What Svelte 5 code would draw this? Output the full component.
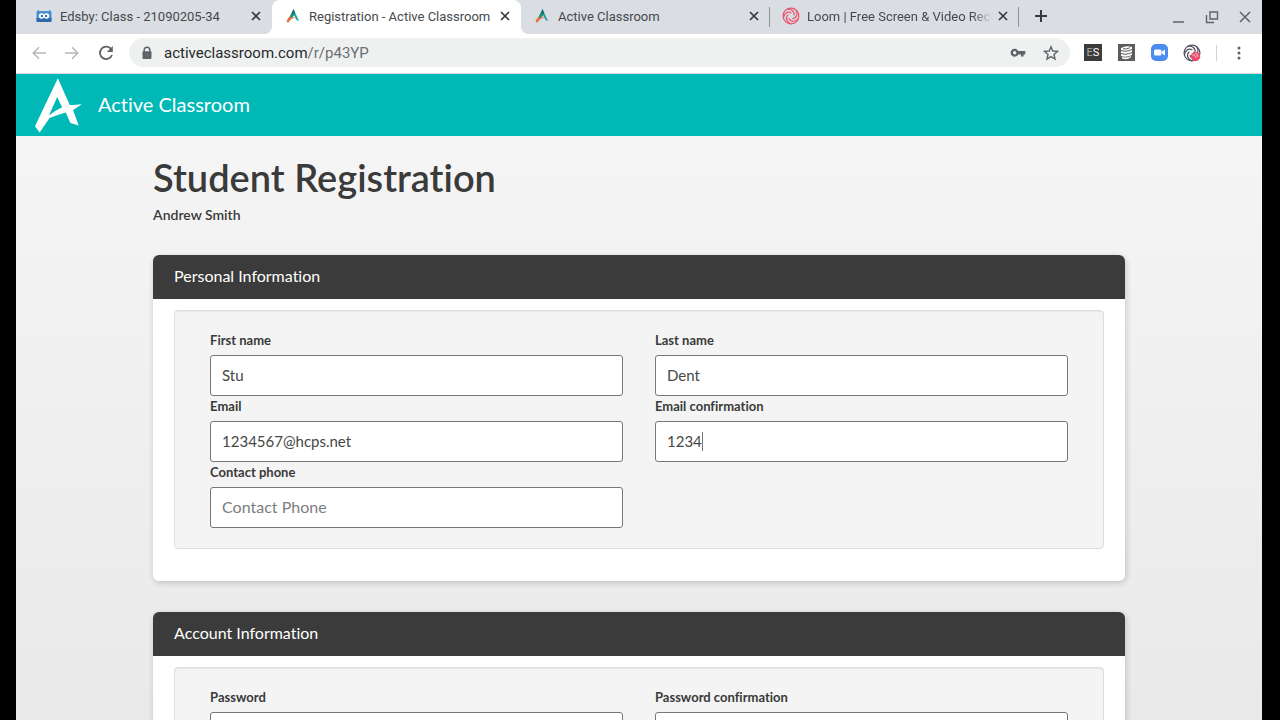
<script>
  const tabs = [
    { title: 'Edsby: Class - 21090205-34', icon: 'edsby' },
    { title: 'Registration - Active Classroom', icon: 'active', current: true },
    { title: 'Active Classroom', icon: 'active' },
    { title: 'Loom | Free Screen & Video Reco', icon: 'loom', faded: true }
  ];

  const sections = [
    {
      title: 'Personal Information',
      fields: [
        { id: 'first-name', label: 'First name', value: 'Stu' },
        { id: 'last-name', label: 'Last name', value: 'Dent' },
        { id: 'email', label: 'Email', value: '1234567@hcps.net' },
        { id: 'email-confirm', label: 'Email confirmation', value: '1234', caret: true },
        { id: 'phone', label: 'Contact phone', value: '', placeholder: 'Contact Phone' }
      ]
    },
    {
      title: 'Account Information',
      fields: [
        { id: 'password', label: 'Password', value: '', type: 'password' },
        { id: 'password-confirm', label: 'Password confirmation', value: '', type: 'password' }
      ]
    }
  ];

  const petals = [0, 72, 144, 216, 288];
</script>

{#snippet swirl()}
  <circle cx="9" cy="9" r="7.900" />
  {#each petals as angle}
    <path d="M4.500 2.500C9 1.500 13 4 12 8.500" transform="rotate({angle} 9 9)" />
  {/each}
{/snippet}

{#snippet cross()}
  <svg width="10" height="10" viewBox="0 0 10 10" class="stroke"><path d="M1 1L9 9M9 1L1 9" stroke-width="1.700" /></svg>
{/snippet}

<div class="screen">
  <div class="tab-strip">
    {#each tabs as tab, i}
      <div class="tab" class:current={tab.current} class:divided={i > 1}>
        {#if tab.icon === 'edsby'}
          <svg class="favicon" width="18" height="16" viewBox="0 0 18 16">
            <path d="M1.500 4L3 2L4.500 3H13.500L15 2L16.500 4V13Q16.500 14 15.500 14H2.500Q1.500 14 1.500 13Z" fill="#4a8fd0" />
            <path d="M1.500 10H16.500V13Q16.500 14 15.500 14H2.500Q1.500 14 1.500 13Z" fill="#2f6bab" />
            <circle cx="6.500" cy="8" r="2.700" fill="#fff" /><circle cx="11.500" cy="8" r="2.700" fill="#fff" />
            <circle cx="6.900" cy="8" r="1.200" fill="#3973a9" /><circle cx="11.100" cy="8" r="1.200" fill="#3973a9" />
          </svg>
        {:else if tab.icon === 'active'}
          <svg class="favicon" width="16" height="16" viewBox="0 0 16 16">
            <path d="M8.500 1L10 6L5.500 12L2 14Z" fill="#248b69" />
            <path d="M8.500 1L14 13L11.500 12L8 5Z" fill="#17a5a5" />
            <path d="M8.500 1L10 5L8 7L7 5Z" fill="#176c75" />
            <path d="M4 9L6.500 9.500L12 9L6 11L3 15L1.500 13Z" fill="#ed7044" />
          </svg>
        {:else}
          <svg class="favicon loom" width="18" height="18" viewBox="0 0 18 18">{@render swirl()}</svg>
        {/if}
        <span class="tab-title" class:faded={tab.faded}>{tab.title}</span>
        <button class="tab-close" aria-label="Close tab">{@render cross()}</button>
      </div>
    {/each}
    <button class="new-tab" aria-label="New tab">
      <svg width="14" height="14" viewBox="0 0 14 14" class="stroke"><path d="M7 1V13M1 7H13" stroke-width="2" /></svg>
    </button>
    <div class="window-controls">
      <button aria-label="Minimize"><svg width="14" height="14" viewBox="0 0 14 14" class="stroke"><path d="M1 12H12" stroke-width="1.500" /></svg></button>
      <button aria-label="Restore"><svg width="14" height="14" viewBox="0 0 14 14" class="stroke"><path d="M5 2H12.500V9H5ZM1.500 5V12.500H9" stroke-width="1.400" /></svg></button>
      <button aria-label="Close"><svg width="14" height="14" viewBox="0 0 14 14" class="stroke"><path d="M2 2L12 12M12 2L2 12" stroke-width="1.500" /></svg></button>
    </div>
  </div>

  <div class="toolbar">
    <div class="nav">
      <button class="faded" aria-label="Back"><svg width="14" height="14" viewBox="0 0 14 14" class="stroke"><path d="M14 7H1.500M7 1.200L1.200 7L7 12.800" stroke-width="1.500" /></svg></button>
      <button class="faded" aria-label="Forward"><svg width="14" height="14" viewBox="0 0 14 14" class="stroke"><path d="M0 7H12.500M7 1.200L12.800 7L7 12.800" stroke-width="1.500" /></svg></button>
      <button aria-label="Reload">
        <svg width="16" height="16" viewBox="0 0 16 16" class="stroke"><path d="M13.200 4.200A6.200 6.200 0 1 0 14 10" stroke-width="1.800" /><path d="M14.800 1V7H8.800Z" fill="currentColor" stroke="none" /></svg>
      </button>
    </div>
    <div class="address">
      <svg width="12" height="14" viewBox="0 0 12 14"><path d="M3.200 6V4A2.800 2.800 0 0 1 8.800 4V6" fill="none" stroke="#5f6368" stroke-width="1.500" /><rect x="1.500" y="5.300" width="9" height="7.700" rx="1" fill="#5f6368" /><circle cx="6" cy="9" r="1" fill="#777b80" /></svg>
      <span class="url">activeclassroom.com<span>/r/p43YP</span></span>
      <button aria-label="Saved passwords">
        <svg width="16" height="16" viewBox="0 0 16 16"><path fill-rule="evenodd" d="M8.200 6A4 4 0 1 0 8.200 9.400H11V11.500H13.600V9.400H15.300V6ZM4.700 6.100A1.700 1.700 0 1 1 4.700 9.500A1.700 1.700 0 1 1 4.700 6.100Z" fill="#5f6368" /></svg>
      </button>
      <button aria-label="Bookmark">
        <svg width="16" height="16" viewBox="0 0 16 16" class="stroke"><path d="M8 1.800L9.800 6L14.500 6.400L11 9.500L12 14L8 11.600L4 14L5 9.500L1.500 6.400L6.200 6Z" stroke-width="1.400" /></svg>
      </button>
    </div>
    <div class="extensions">
      <button class="es" aria-label="ES extension"><span>E</span>S</button>
      <button aria-label="Notes extension">
        <svg width="17" height="17" viewBox="0 0 17 17"><rect width="17" height="17" fill="#5c5c5c" /><g fill="#fff"><path d="M3 4Q8 1 14 3V5Q8 8 3 6Z" /><path d="M3 7Q8 9 14 6V8Q8 11 3 9ZM3 10Q8 12 14 9V11Q8 14 3 12ZM4 13Q9 14.500 13 12V13Q9 16.500 4 14.500Z" /></g><path d="M5 4.700Q8 5.800 12 3.700" stroke="#5c5c5c" fill="none" /></svg>
      </button>
      <button aria-label="Zoom extension">
        <svg width="17" height="17" viewBox="0 0 17 17"><rect width="17" height="17" rx="5" fill="#4a8cf0" /><rect x="3" y="5.500" width="7.500" height="6" rx="1.500" fill="#fff" /><path d="M11 7.500L14 5.500V11.500L11 9.500Z" fill="#fff" /></svg>
      </button>
      <button aria-label="Loom extension">
        <svg class="loom-ext" width="18" height="18" viewBox="0 0 18 18">{@render swirl()}<circle cx="12.500" cy="12.500" r="4.700" class="dot" /><path d="M9 11Q12 10 13 14M12 9Q15 10 15 13" class="dot-line" /></svg>
      </button>
      <span class="rule"></span>
      <button aria-label="Browser menu">
        <svg width="14" height="14" viewBox="0 0 14 14" fill="#5f6368"><circle cx="7" cy="2" r="1.500" /><circle cx="7" cy="7" r="1.500" /><circle cx="7" cy="12" r="1.500" /></svg>
      </button>
    </div>
  </div>

  <header>
    <svg width="47" height="55" viewBox="104 233 142 165">
      <path fill="#fff" fill-rule="evenodd" d="M173 233L209 314Q226 315 245 311Q235 320 219 329L236 376L211 368L197 337Q170 345 148 353L118 397L104 378ZM171 290L146 346Q164 331 186 321Z" />
    </svg>
    <a href="#home">Active Classroom</a>
  </header>

  <main>
    <div class="content">
      <h1>Student Registration</h1>
      <p class="teacher">Andrew Smith</p>
      {#each sections as section}
        <section class="panel">
          <h2>{section.title}</h2>
          <div class="fields">
            {#each section.fields as field (field.id)}
              <div>
                <label for={field.id}>{field.label}</label>
                <div class="control">
                  <input id={field.id} type={field.type ?? 'text'} value={field.value} placeholder={field.placeholder} />
                  {#if field.caret}<span class="caret"></span>{/if}
                </div>
              </div>
            {/each}
          </div>
        </section>
      {/each}
    </div>
  </main>
</div>

<style>
  :global(body) {
    background: #000;
  }

  .screen {
    display: flex;
    flex-direction: column;
    height: 100vh;
    margin: 0 18px 0 16px;
    overflow: hidden;
    background: #fff;
    font-family: Lato, "Open Sans", sans-serif;
    font-variant-ligatures: none;
    color: #393a39;
  }

  button {
    display: flex;
    align-items: center;
    justify-content: center;
    padding: 0;
    border: 0;
    background: none;
    color: #5f6368;
  }

  svg {
    display: block;
    flex: none;
  }

  .stroke {
    fill: none;
    stroke: currentColor;
  }

  .tab-strip {
    display: flex;
    flex: none;
    height: 34px;
    padding-left: 7px;
    background: #dadde2;
    font-family: Roboto, sans-serif;
    font-size: 13px;
  }

  .tab {
    display: flex;
    align-items: center;
    box-sizing: border-box;
    flex: 0 1 249px;
    min-width: 0;
    padding: 0 9px 2px 12px;
    color: #45494d;
  }

  .tab.current {
    position: relative;
    border-radius: 8px 8px 0 0;
    background: #fff;
  }

  .tab.current::before,
  .tab.current::after {
    content: '';
    position: absolute;
    bottom: 0;
    width: 8px;
    height: 8px;
  }

  .tab.current::before {
    right: 100%;
    background: radial-gradient(circle at 0 0, #dadde2 8px, #fff 8px);
  }

  .tab.current::after {
    left: 100%;
    background: radial-gradient(circle at 100% 0, #dadde2 8px, #fff 8px);
  }

  .tab.divided {
    background: linear-gradient(#8f9398, #8f9398) right 7px / 1px 20px no-repeat;
  }

  .favicon {
    width: 18px;
  }

  .tab-title {
    flex: 1;
    margin-left: 7px;
    overflow: hidden;
    white-space: nowrap;
  }

  .tab-title.faded {
    mask-image: linear-gradient(to left, transparent, #000 20px);
  }

  .tab-close {
    width: 14px;
    height: 18px;
    margin-left: 4px;
    color: #36393d;
  }

  .loom {
    fill: none;
    stroke: #ea536e;
    stroke-width: 1.2;
  }

  .new-tab {
    width: 44px;
    padding-bottom: 2px;
    color: #36393d;
  }

  .window-controls {
    display: flex;
    gap: 19px;
    margin-left: auto;
    padding-right: 10px;
  }

  .toolbar {
    display: flex;
    align-items: center;
    flex: none;
    box-sizing: border-box;
    height: 40px;
    padding: 0 16px 2px;
    border-bottom: 1px solid #d9dddd;
  }

  .nav {
    display: flex;
    gap: 19px;
    margin-right: 15px;
  }

  .nav .faded {
    color: #b4b7ba;
  }

  .address {
    display: flex;
    align-items: center;
    flex: 1;
    gap: 17px;
    height: 29px;
    padding: 0 11px 0 12px;
    border-radius: 15px;
    background: #eff1f1;
    font-family: Roboto, sans-serif;
    font-size: 15px;
  }

  .url {
    flex: 1;
    margin-left: -6px;
    color: #26292c;
  }

  .url span {
    color: #6b6e72;
  }

  .extensions {
    display: flex;
    align-items: center;
    gap: 15px;
    margin-left: 14px;
  }

  .extensions button {
    min-width: 18px;
  }

  .extensions button:last-child {
    min-width: 14px;
  }

  .es {
    height: 17px;
    background: #3b3b3b;
    color: #fff;
    font: 11px Roboto, sans-serif;
  }

  .es span {
    color: #aaa;
  }

  .loom-ext {
    fill: none;
    stroke: #50515e;
    stroke-width: 1.2;
  }

  .dot {
    fill: #ea4a68;
    stroke: none;
  }

  .dot-line {
    stroke: #f5a5b3;
  }

  .rule {
    width: 1px;
    height: 16px;
    background: #d0d3d6;
  }

  header {
    display: flex;
    align-items: center;
    flex: none;
    gap: 16px;
    height: 62px;
    padding-left: 19px;
    background: #00b9b7;
  }

  header a {
    padding-bottom: 2px;
    color: #fff;
    font-size: 20px;
    text-decoration: none;
  }

  main {
    flex: 1;
    min-height: 0;
    overflow: hidden;
    background: linear-gradient(#f5f5f5, #e9e9e9);
  }

  .content {
    width: 78%;
    margin: 0 auto;
  }

  h1 {
    margin: 0;
    padding-top: 18px;
    font-size: 38px;
    font-weight: 600;
    line-height: 46px;
  }

  .teacher {
    margin: 4px 0 29px;
    font-size: 14px;
    font-weight: 600;
    line-height: 22px;
  }

  .panel {
    margin-bottom: 31px;
    padding-bottom: 32px;
    border-radius: 6px;
    background: #fff;
    box-shadow: 1px 2px 6px rgba(0, 0, 0, 0.18);
  }

  h2 {
    margin: 0 0 11px;
    padding: 0 21px 2px;
    border-radius: 6px 6px 0 0;
    background: #3a3b3a;
    color: #fff;
    font-size: 16px;
    font-weight: 400;
    line-height: 42px;
  }

  .fields {
    display: grid;
    grid-template-columns: 1fr 1fr;
    column-gap: 32px;
    margin: 0 21px;
    padding: 19px 35px 20px;
    border: 1px solid #dedede;
    border-radius: 4px;
    background: #f4f4f4;
    box-shadow: inset 0 1px 1px rgba(0, 0, 0, 0.05);
  }

  label {
    display: block;
    padding-bottom: 5px;
    font-size: 13px;
    font-weight: 700;
    line-height: 20px;
  }

  .control {
    position: relative;
  }

  input {
    display: block;
    box-sizing: border-box;
    width: 100%;
    height: 41px;
    padding: 0 11px 2px;
    border: 1px solid #777;
    border-radius: 3px;
    background: #fff;
    color: #464746;
    font: 15px Lato, "Open Sans", sans-serif;
  }

  input::placeholder {
    color: #7d7d7d;
    font-size: 16px;
  }

  .caret {
    position: absolute;
    top: 11px;
    left: 47px;
    width: 1px;
    height: 19px;
    background: #777;
  }
</style>
